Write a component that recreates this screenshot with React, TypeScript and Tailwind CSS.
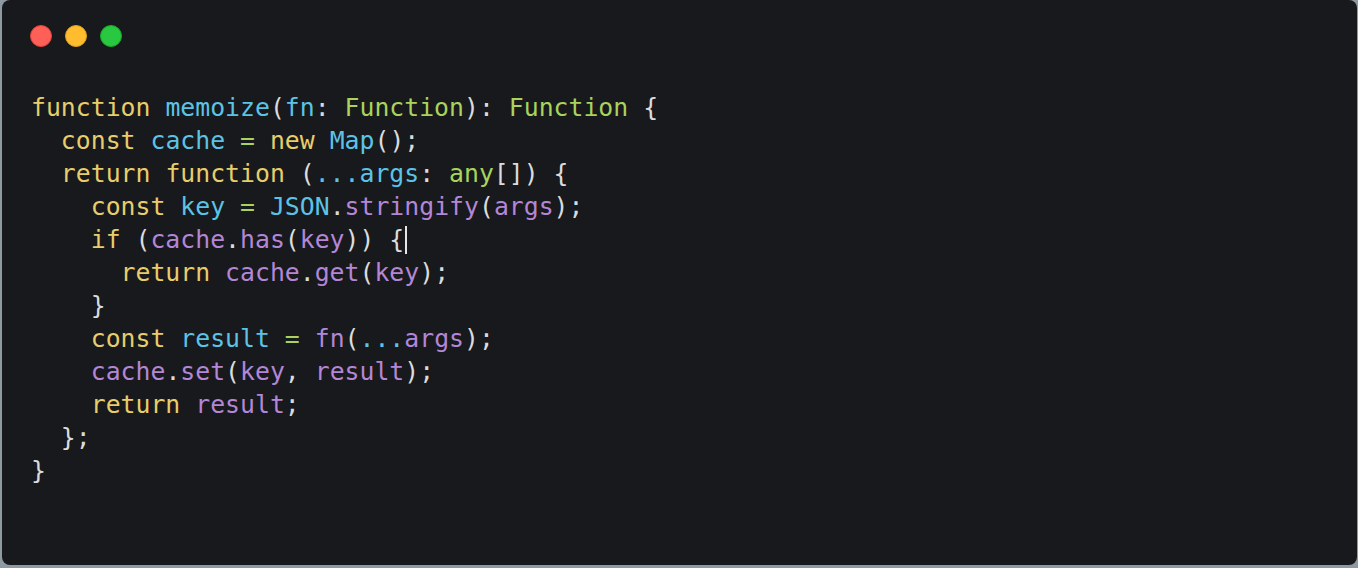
import React from "react";

type Tok = [string, string];

const Y = "text-[#e8cd6b]";
const B = "text-[#5cc3e6]";
const G = "text-[#a8d35c]";
const P = "text-[#b486d6]";
const W = "text-[#dcdcdc]";

const lines: Tok[][] = [
	[["function", Y], [" ", W], ["memoize", B], ["(", W], ["fn", B], [": ", W], ["Function", G], ["): ", W], ["Function", G], [" {", W]],
	[["  ", W], ["const", Y], [" ", W], ["cache", B], [" ", W], ["=", G], [" ", W], ["new", Y], [" ", W], ["Map", B], ["();", W]],
	[["  ", W], ["return", Y], [" ", W], ["function", Y], [" (", W], ["...", B], ["args", B], [": ", W], ["any", G], ["[]) {", W]],
	[["    ", W], ["const", Y], [" ", W], ["key", B], [" ", W], ["=", G], [" ", W], ["JSON", B], [".", W], ["stringify", P], ["(", W], ["args", P], [");", W]],
	[["    ", W], ["if", Y], [" (", W], ["cache", P], [".", W], ["has", P], ["(", W], ["key", P], [")) {", W]],
	[["      ", W], ["return", Y], [" ", W], ["cache", P], [".", W], ["get", P], ["(", W], ["key", P], [");", W]],
	[["    }", W]],
	[["    ", W], ["const", Y], [" ", W], ["result", B], [" ", W], ["=", G], [" ", W], ["fn", P], ["(", W], ["...", B], ["args", P], [");", W]],
	[["    ", W], ["cache", P], [".", W], ["set", P], ["(", W], ["key", P], [", ", W], ["result", P], [");", W]],
	[["    ", W], ["return", Y], [" ", W], ["result", P], [";", W]],
	[["  };", W]],
	[["}", W]],
];

const App: React.FC = () => {
	return (
		<div className="w-[1358px] h-[568px] bg-[#8e9aa2] pl-[2px] pb-[3px] pr-[1px] overflow-hidden">
			<div className="h-full bg-[#18191c] rounded-[8px]">
				{/* window controls */}
				<div className="flex gap-[13px] pl-[28px] pt-[25px]">
					<span className="w-[22px] h-[22px] rounded-full bg-[#fe5f57] border border-[#e0443e]" />
					<span className="w-[22px] h-[22px] rounded-full bg-[#febc2e] border border-[#dea123]" />
					<span className="w-[22px] h-[22px] rounded-full bg-[#28c840] border border-[#1aab29]" />
				</div>
				<pre className="mt-[44px] pl-[29px] font-['DejaVu_Sans_Mono',monospace] text-[24.8px] leading-[33px]">
					{lines.map((line, i) => (
						<div key={i} className="h-[33px]">
							{line.map(([t, c], j) => (
								<span key={j} className={c}>
									{t}
								</span>
							))}
							{i === 4 && (
								<span className="inline-block w-[2px] h-[28px] bg-[#e6e6e6] align-[-6px] ml-[1px]" />
							)}
						</div>
					))}
				</pre>
			</div>
		</div>
	);
};

export default App;
